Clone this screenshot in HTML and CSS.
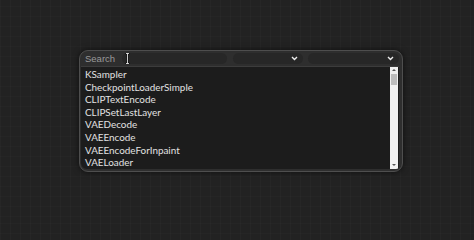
FILE: index.html
```html
<!DOCTYPE html>
<html>
<head>
<meta charset="utf-8">
<link rel="stylesheet" href="styles.css">
</head>
<body>
<div class="dialog">
  <div class="header">
    <span class="label">Search</span>
    <div class="input">
      <svg class="cursor" width="5" height="11" viewBox="0 0 5 11"><path d="M0.5 0.5h4M2.5 0.5v10M0.5 10.5h4" stroke="#000" stroke-width="1.6" fill="none"/><path d="M1 0.5h3M2.5 0.5v10M1 10.5h3" stroke="#fff" stroke-width="0.8" fill="none"/></svg>
    </div>
    <div class="select s1"><svg class="chev" width="7" height="5" viewBox="0 0 7 5"><path d="M1 1l2.5 2.5L6 1" stroke="#eee" stroke-width="1.4" fill="none"/></svg></div>
    <div class="select s2"><svg class="chev" width="7" height="5" viewBox="0 0 7 5"><path d="M1 1l2.5 2.5L6 1" stroke="#eee" stroke-width="1.4" fill="none"/></svg></div>
  </div>
  <div class="list">
    <div class="items">
      <div class="item">KSampler</div>
      <div class="item">CheckpointLoaderSimple</div>
      <div class="item">CLIPTextEncode</div>
      <div class="item">CLIPSetLastLayer</div>
      <div class="item">VAEDecode</div>
      <div class="item">VAEEncode</div>
      <div class="item">VAEEncodeForInpaint</div>
      <div class="item">VAELoader</div>
    </div>
    <div class="scrollbar">
      <div class="arrow up"></div>
      <div class="thumb"></div>
      <div class="track"></div>
      <div class="arrow down"></div>
    </div>
  </div>
</div>
</body>
</html>
```
FILE: styles.css
```css
html, body {
  margin: 0;
  padding: 0;
}
body {
  width: 474px;
  height: 217px;
  overflow: hidden;
  background-color: #222222;
  background-image:
    repeating-linear-gradient(90deg, rgba(255,255,255,0.018) 0 1px, transparent 1px 10px),
    repeating-linear-gradient(0deg, rgba(255,255,255,0.012) 0 1px, transparent 1px 10px);
  font-family: "Lato", "Liberation Sans", sans-serif;
  padding-top: 50px;
  box-sizing: border-box;
}
.dialog {
  margin-left: 79px;
  width: 324px;
  height: 122px;
  box-sizing: border-box;
  border: 1px solid #4e4e4e;
  border-radius: 9px;
  background: #2e2e2e;
  box-shadow: 0 0 6px rgba(0,0,0,0.6);
  display: flex;
  flex-direction: column;
  overflow: hidden;
}
.header {
  height: 15px;
  display: flex;
  align-items: center;
  padding: 0 0 0 5px;
  flex: none;
}
.label {
  color: #9a9a9a;
  font-size: 9.5px;
  width: 37px;
  font-family: "Liberation Sans", sans-serif;
}
.input {
  width: 105px;
  height: 11px;
  border-radius: 6px;
  background: #272727;
  display: flex;
  align-items: center;
  padding-left: 3px;
  box-sizing: border-box;
}
.cursor {
  display: block;
}
.select {
  height: 11px;
  border-radius: 6px;
  background: #272727;
  display: flex;
  align-items: center;
  justify-content: flex-end;
  padding-right: 5px;
  box-sizing: border-box;
}
.s1 {
  width: 70px;
  margin-left: 6px;
}
.s2 {
  width: 91px;
  margin-left: 5px;
}
.chev {
  display: block;
}
.list {
  flex: 1;
  margin: 0 3px 2px 1px;
  background: #1c1c1c;
  border-top: 1px solid #3c3c3c;
  display: flex;
  border-radius: 0 0 3px 6px;
  overflow: hidden;
}
.items {
  flex: 1;
  padding: 1px 0 0 4px;
}
.item {
  color: #e2e2e2;
  font-size: 9.9px;
  line-height: 12.6px;
  height: 12.6px;
  white-space: nowrap;
}
.scrollbar {
  width: 8px;
  margin-right: 1px;
  background: #f0f0f0;
  display: flex;
  flex-direction: column;
  align-items: center;
}
.arrow {
  height: 7px;
  width: 8px;
  position: relative;
  flex: none;
}
.arrow::after {
  content: "";
  position: absolute;
  left: 2px;
  top: 2px;
  border-left: 2px solid transparent;
  border-right: 2px solid transparent;
}
.up::after {
  border-bottom: 2px solid #555;
}
.down::after {
  border-top: 2px solid #555;
}
.thumb {
  width: 6px;
  height: 11px;
  background: #bcbcbc;
  flex: none;
}
.track {
  flex: 1;
}
```
